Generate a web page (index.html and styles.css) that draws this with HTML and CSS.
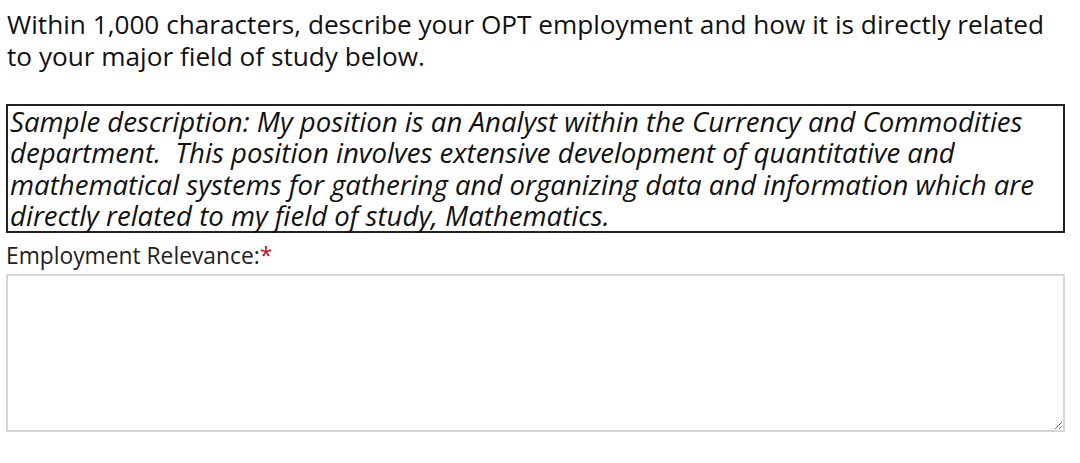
FILE: index.html
```html
<!DOCTYPE html>
<html lang="en">
<head>
  <meta charset="UTF-8" />
  <title>Employment Relevance</title>
  <link rel="stylesheet" href="styles.css">
</head>
<body>
  <div class="question">
    <p class="prompt">Within 1,000 characters, describe your OPT employment and how it is directly related to your major field of study below.</p>
    <div class="sample">Sample description: My position is an Analyst within the Currency and Commodities department.&nbsp; This position involves extensive development of quantitative and mathematical systems for gathering and organizing data and information which are directly related to my field of study, Mathematics.</div>
    <label class="field-label" for="relevance">Employment Relevance:<span class="req">*</span></label>
    <textarea id="relevance" class="field"></textarea>
  </div>
</body>
</html>
```

FILE: styles.css
```css
* { box-sizing: border-box; }
body {
  margin: 0;
  font-family: "Open Sans", Arial, sans-serif;
  background: #fff;
  color: #111;
}
.question {
  padding: 8px 15px 0 6px;
}
.prompt {
  font-size: 26.2px;
  line-height: 32px;
  margin: 0 0 32px 1px;
}
.sample {
  border: 2px solid #222;
  padding: 0 2px;
  font-style: italic;
  font-size: 27.6px;
  line-height: 31.25px;
}
.field-label {
  display: block;
  font-size: 22.8px;
  line-height: 28px;
  margin: 9px 0 4px 0;
  color: #222;
}
.req {
  color: #c0121b;
}
.field {
  display: block;
  width: 100%;
  height: 158px;
  border: 2px solid #d6d6d6;
  border-radius: 0;
  font-family: inherit;
  font-size: 20px;
}
```
